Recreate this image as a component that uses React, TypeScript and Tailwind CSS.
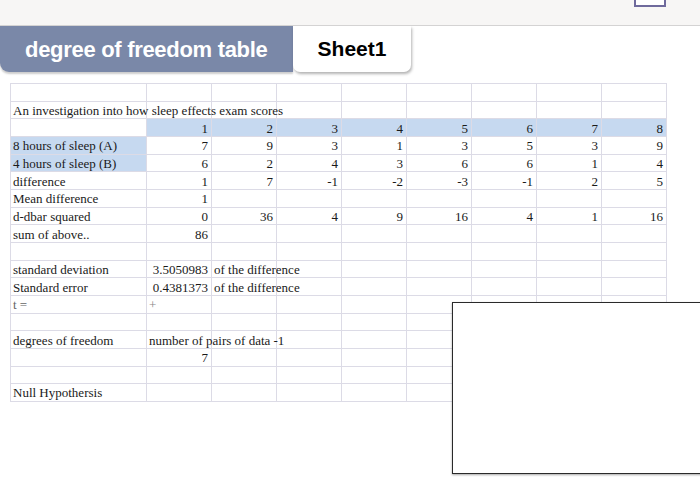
import React from "react";

type Cell = { t?: string; align?: "l" | "r"; blue?: boolean; cls?: string };

const L = (t: string, extra: Partial<Cell> = {}): Cell => ({ t, align: "l", ...extra });
const R = (t: string, extra: Partial<Cell> = {}): Cell => ({ t, align: "r", ...extra });

const nums = (arr: (string | number)[]): Cell[] => arr.map((v) => R(String(v)));

function buildRows(): Cell[][] {
  const blank = (): Cell[] => Array.from({ length: 9 }, () => ({}));
  const rows: Cell[][] = [];
  const pad = (r: Cell[]) => {
    while (r.length < 9) r.push({});
    return r;
  };
  rows.push(blank());
  rows.push(pad([L("An investigation into how sleep effects exam scores")]));
  rows.push([{}, ...[1, 2, 3, 4, 5, 6, 7, 8].map((n) => R(String(n), { blue: true }))]);
  rows.push([L("8 hours of sleep (A)", { blue: true }), ...nums([7, 9, 3, 1, 3, 5, 3, 9])]);
  rows.push([L("4 hours of sleep (B)", { blue: true }), ...nums([6, 2, 4, 3, 6, 6, 1, 4])]);
  rows.push([L("difference"), ...nums([1, 7, -1, -2, -3, -1, 2, 5])]);
  rows.push(pad([L("Mean difference"), R("1")]));
  rows.push([L("d-dbar squared"), ...nums([0, 36, 4, 9, 16, 4, 1, 16])]);
  rows.push(pad([L("sum of above.."), R("86")]));
  rows.push(blank());
  rows.push(pad([L("standard deviation"), R("3.5050983"), L("of the difference")]));
  rows.push(pad([L("Standard error"), R("0.4381373"), L("of the difference")]));
  rows.push(pad([L("t =", { cls: "text-[#666]" }), L("+", { cls: "text-[#888]" })]));
  rows.push(blank());
  rows.push(pad([L("degrees of freedom"), L("number of pairs of data -1", { cls: "pl-[2px]" })]));
  rows.push(pad([{}, R("7")]));
  rows.push(blank());
  rows.push(pad([L("Null Hypothersis")]));
  return rows;
}

export default function App() {
  const rows = buildRows();
  return (
    <div className="relative w-[700px] h-[496px] overflow-hidden bg-white" style={{ fontFamily: '"Liberation Sans", Arial, sans-serif' }}>
      {/* top bar */}
      <div className="relative h-[26px] bg-[#f7f6f5] border-b border-[#d4d3d3]">
        <div className="absolute left-[634px] top-[-4px] w-[32px] h-[11px] border-2 border-[#6f6a9c] bg-white" />
      </div>

      {/* tabs */}
      <div className="flex h-[46px]">
        <div className="w-[293px] h-full bg-[#7a88a8] rounded-bl-[9px] shadow-[0_2px_2px_rgba(0,0,0,0.2)] flex items-center pl-[25px]">
          <span className="text-white font-bold text-[22px] tracking-[-0.3px]">degree of freedom table</span>
        </div>
        <div className="w-[118px] h-full bg-white rounded-b-[7px] shadow-[1px_2px_3px_rgba(0,0,0,0.3)] flex items-center justify-center">
          <span className="text-black font-bold text-[21px]">Sheet1</span>
        </div>
      </div>

      {/* sheet */}
      <div className="mt-[11px] ml-[10px]" style={{ fontFamily: '"Liberation Serif", "Times New Roman", serif' }}>
        <div className="grid grid-cols-[136px_repeat(8,65px)] grid-rows-[repeat(18,17.67px)] border-l border-t border-[#dcdbe6] w-max">
          {rows.map((r, ri) =>
            r.map((c, ci) => (
              <div
                key={`${ri}-${ci}`}
                className={`relative border-r border-b border-[#dcdbe6] flex items-center text-[13px] leading-none text-[#1a1a1a] whitespace-nowrap overflow-visible ${
                  c.blue ? "bg-[#c6d9f0]" : ""
                } ${c.align === "r" ? "justify-end pr-[3px]" : "pl-[2px]"} ${c.cls ?? ""}`}
              >
                {c.t ? <span className="relative z-10 pt-[1px]">{c.t}</span> : null}
              </div>
            ))
          )}
        </div>
      </div>

      {/* overlay box */}
      <div className="absolute left-[452px] top-[302px] w-[260px] h-[172px] bg-white border-[1.5px] border-[#2a2a2a] shadow-[0_1px_2px_rgba(0,0,0,0.35)] z-20" />
    </div>
  );
}
